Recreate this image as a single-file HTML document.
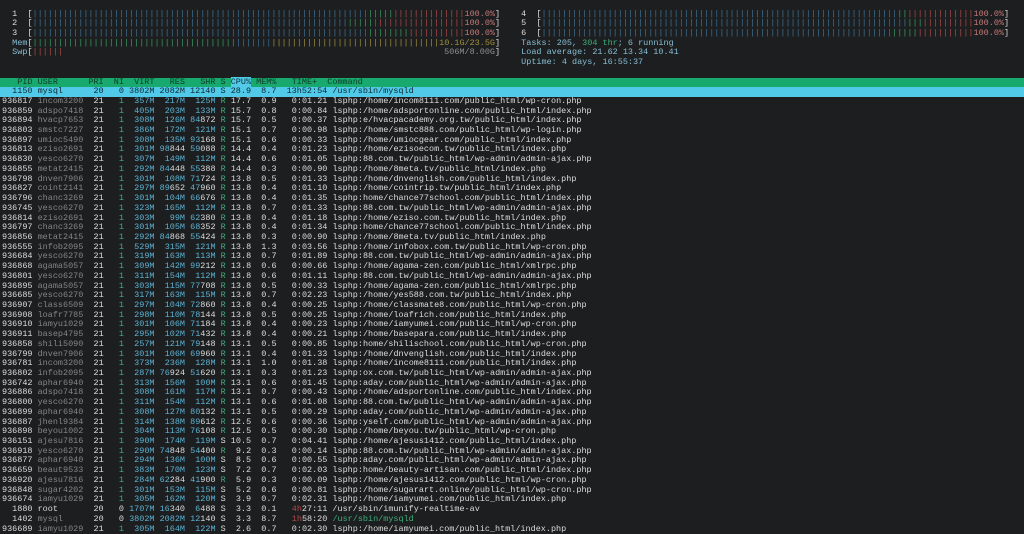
<!DOCTYPE html>
<html><head><meta charset="utf-8"><style>
html,body{margin:0;padding:0;background:#1d1e1f;width:1024px;height:529px;overflow:hidden}
.t{position:absolute;white-space:pre;font-family:"Liberation Mono",monospace;font-size:8.48px;line-height:9.72px;color:#dcdcdc}
i{font-style:normal;color:#858585}
b{font-weight:normal;color:#5bb3d5}
u{text-decoration:none;color:#3fae7a}
.r{color:#b04a4a}.bl{color:#3c7196}.gr{color:#3b9c62}.ye{color:#a08f3c}.lb{color:#86bfd6}.pc{color:#c87a7a}.gy{color:#8f8f8f}
.hd{position:absolute;left:0;width:1024px;height:9.72px}
.hd .t{left:2px;top:0}
</style></head><body>
<div class="t" style="left:2px;top:9.5px"><span>  1  [</span><span class="bl">||||||||||||||||||||||||||||||||||||||||||||||||||||||||||||||||||</span><span class="gr">|||||</span><span class="r">||||||||||||||</span><span class="pc">100.0%</span>]
  2  [<span class="bl">||||||||||||||||||||||||||||||||||||||||||||||||||||||||||||||</span><span class="gr">|||||</span><span class="r">||||||||||||||||||</span><span class="pc">100.0%</span>]
  3  [<span class="bl">||||||||||||||||||||||||||||||||||||||||||||||||||||||||||||||||||</span><span class="gr">||||||||</span><span class="r">|||||||||||</span><span class="pc">100.0%</span>]
  <span class="lb">Mem</span>[<span class="gr">||||||||||||||||||||||||||||||||||||||||</span><span class="bl">|||||||</span><span class="ye">|||||||||||||||||||||||||||||||||</span><span class="ye">10.1G/23.5G</span>]
  <span class="lb">Swp</span>[<span class="r">||||||</span>                                                                           <span class="gy">506M/8.00G</span>]</div>
<div class="t" style="left:511px;top:9.5px">  4  [<span class="bl">||||||||||||||||||||||||||||||||||||||||||||||||||||||||||||||||||||||</span><span class="gr">||</span><span class="r">|||||||||||||</span><span class="pc">100.0%</span>]
  5  [<span class="bl">||||||||||||||||||||||||||||||||||||||||||||||||||||||||||||||||||||||||</span><span class="gr">|||</span><span class="r">||||||||||</span><span class="pc">100.0%</span>]
  6  [<span class="bl">|||||||||||||||||||||||||||||||||||||||||||||||||||||||||||||||||||||</span><span class="gr">|||||</span><span class="r">|||||||||||</span><span class="pc">100.0%</span>]
  <span class="lb">Tasks: 205, </span><u>304 thr</u><span class="lb">; 6 running</span>
  <span class="lb">Load average: 21.62 13.34 10.41</span>
  <span class="lb">Uptime: 4 days, 16:55:37</span></div>
<div class="hd" style="top:77.5px;background:#17a96e"><div class="t" style="color:#0d3a26">   PID USER      PRI  NI  VIRT   RES   SHR S <span style="background:#52cbe8;color:#0d2f3a">CPU%</span> MEM%   TIME+  Command</div></div>
<div class="hd" style="top:87.2px;background:#50cae8"><div class="t" style="color:#0d2833">  1150 mysql      20   0 3802M 2082M 12140 S 28.9  8.7  13h52:54 /usr/sbin/mysqld</div></div>
<div class="t" style="left:2px;top:96.9px">936817 <i>incom3200</i>  21   <u>1</u>  <b>357M</b>  <b>217M</b>  <b>125M</b> <u>R</u> 17.7  0.9   0:01.21 lsphp:/home/incom8111.com/public_html/wp-cron.php
936859 <i>adspo7418</i>  21   <u>1</u>  <b>405M</b>  <b>203M</b>  <b>133M</b> <u>R</u> 15.7  0.8   0:00.84 lsphp:/home/adsportonline.com/public_html/index.php
936894 <i>hvacp7653</i>  21   <u>1</u>  <b>308M</b>  <b>126M</b> <b>84</b>872 <u>R</u> 15.7  0.5   0:00.37 lsphp:e/hvacpacademy.org.tw/public_html/index.php
936803 <i>smstc7227</i>  21   <u>1</u>  <b>386M</b>  <b>172M</b>  <b>121M</b> <u>R</u> 15.1  0.7   0:00.98 lsphp:/home/smstc888.com/public_html/wp-login.php
936897 <i>umioc5490</i>  21   <u>1</u>  <b>308M</b>  <b>135M</b> <b>93</b>168 <u>R</u> 15.1  0.6   0:00.33 lsphp:/home/umiocgear.com/public_html/index.php
936813 <i>eziso2691</i>  21   <u>1</u>  <b>301M</b> <b>98</b>844 <b>59</b>088 <u>R</u> 14.4  0.4   0:01.23 lsphp:/home/ezisoecom.tw/public_html/index.php
936830 <i>yesco6270</i>  21   <u>1</u>  <b>307M</b>  <b>149M</b>  <b>112M</b> <u>R</u> 14.4  0.6   0:01.05 lsphp:88.com.tw/public_html/wp-admin/admin-ajax.php
936855 <i>metat2415</i>  21   <u>1</u>  <b>292M</b> <b>84</b>448 <b>55</b>388 <u>R</u> 14.4  0.3   0:00.90 lsphp:/home/8meta.tv/public_html/index.php
936798 <i>dnven7906</i>  21   <u>1</u>  <b>301M</b>  <b>108M</b> <b>71</b>724 <u>R</u> 13.8  0.5   0:01.33 lsphp:/home/dnvenglish.com/public_html/index.php
936827 <i>coint2141</i>  21   <u>1</u>  <b>297M</b> <b>89</b>652 <b>47</b>960 <u>R</u> 13.8  0.4   0:01.10 lsphp:/home/cointrip.tw/public_html/index.php
936796 <i>chanc3269</i>  21   <u>1</u>  <b>301M</b>  <b>104M</b> <b>66</b>676 <u>R</u> 13.8  0.4   0:01.35 lsphp:home/chance77school.com/public_html/index.php
936745 <i>yesco6270</i>  21   <u>1</u>  <b>323M</b>  <b>165M</b>  <b>112M</b> <u>R</u> 13.8  0.7   0:01.33 lsphp:88.com.tw/public_html/wp-admin/admin-ajax.php
936814 <i>eziso2691</i>  21   <u>1</u>  <b>303M</b>   <b>99M</b> <b>62</b>380 <u>R</u> 13.8  0.4   0:01.18 lsphp:/home/eziso.com.tw/public_html/index.php
936797 <i>chanc3269</i>  21   <u>1</u>  <b>301M</b>  <b>105M</b> <b>68</b>352 <u>R</u> 13.8  0.4   0:01.34 lsphp:home/chance77school.com/public_html/index.php
936856 <i>metat2415</i>  21   <u>1</u>  <b>292M</b> <b>84</b>868 <b>55</b>424 <u>R</u> 13.8  0.3   0:00.90 lsphp:/home/8meta.tv/public_html/index.php
936555 <i>infob2095</i>  21   <u>1</u>  <b>529M</b>  <b>315M</b>  <b>121M</b> <u>R</u> 13.8  1.3   0:03.56 lsphp:/home/infobox.com.tw/public_html/wp-cron.php
936684 <i>yesco6270</i>  21   <u>1</u>  <b>319M</b>  <b>163M</b>  <b>113M</b> <u>R</u> 13.8  0.7   0:01.89 lsphp:88.com.tw/public_html/wp-admin/admin-ajax.php
936868 <i>agama5057</i>  21   <u>1</u>  <b>309M</b>  <b>142M</b> <b>99</b>212 <u>R</u> 13.8  0.6   0:00.66 lsphp:/home/agama-zen.com/public_html/xmlrpc.php
936801 <i>yesco6270</i>  21   <u>1</u>  <b>311M</b>  <b>154M</b>  <b>112M</b> <u>R</u> 13.8  0.6   0:01.11 lsphp:88.com.tw/public_html/wp-admin/admin-ajax.php
936895 <i>agama5057</i>  21   <u>1</u>  <b>303M</b>  <b>115M</b> <b>77</b>708 <u>R</u> 13.8  0.5   0:00.33 lsphp:/home/agama-zen.com/public_html/xmlrpc.php
936685 <i>yesco6270</i>  21   <u>1</u>  <b>317M</b>  <b>163M</b>  <b>115M</b> <u>R</u> 13.8  0.7   0:02.23 lsphp:/home/yes588.com.tw/public_html/index.php
936907 <i>class6509</i>  21   <u>1</u>  <b>297M</b>  <b>104M</b> <b>72</b>860 <u>R</u> 13.8  0.4   0:00.25 lsphp:/home/classmate8.com/public_html/wp-cron.php
936908 <i>loafr7785</i>  21   <u>1</u>  <b>298M</b>  <b>110M</b> <b>78</b>144 <u>R</u> 13.8  0.5   0:00.25 lsphp:/home/loafrich.com/public_html/index.php
936910 <i>iamyu1029</i>  21   <u>1</u>  <b>301M</b>  <b>106M</b> <b>71</b>184 <u>R</u> 13.8  0.4   0:00.23 lsphp:/home/iamyumei.com/public_html/wp-cron.php
936911 <i>basep4795</i>  21   <u>1</u>  <b>295M</b>  <b>102M</b> <b>71</b>432 <u>R</u> 13.8  0.4   0:00.21 lsphp:/home/basepara.com/public_html/index.php
936858 <i>shili5090</i>  21   <u>1</u>  <b>257M</b>  <b>121M</b> <b>79</b>148 <u>R</u> 13.1  0.5   0:00.85 lsphp:home/shilischool.com/public_html/wp-cron.php
936799 <i>dnven7906</i>  21   <u>1</u>  <b>301M</b>  <b>106M</b> <b>69</b>960 <u>R</u> 13.1  0.4   0:01.33 lsphp:/home/dnvenglish.com/public_html/index.php
936781 <i>incom3200</i>  21   <u>1</u>  <b>373M</b>  <b>236M</b>  <b>128M</b> <u>R</u> 13.1  1.0   0:01.38 lsphp:/home/income8111.com/public_html/index.php
936802 <i>infob2095</i>  21   <u>1</u>  <b>287M</b> <b>76</b>924 <b>51</b>620 <u>R</u> 13.1  0.3   0:01.23 lsphp:ox.com.tw/public_html/wp-admin/admin-ajax.php
936742 <i>aphar6940</i>  21   <u>1</u>  <b>313M</b>  <b>156M</b>  <b>100M</b> <u>R</u> 13.1  0.6   0:01.45 lsphp:aday.com/public_html/wp-admin/admin-ajax.php
936886 <i>adspo7418</i>  21   <u>1</u>  <b>308M</b>  <b>161M</b>  <b>117M</b> <u>R</u> 13.1  0.7   0:00.43 lsphp:/home/adsportonline.com/public_html/index.php
936800 <i>yesco6270</i>  21   <u>1</u>  <b>311M</b>  <b>154M</b>  <b>112M</b> <u>R</u> 13.1  0.6   0:01.08 lsphp:88.com.tw/public_html/wp-admin/admin-ajax.php
936899 <i>aphar6940</i>  21   <u>1</u>  <b>308M</b>  <b>127M</b> <b>80</b>132 <u>R</u> 13.1  0.5   0:00.29 lsphp:aday.com/public_html/wp-admin/admin-ajax.php
936887 <i>jhenl9384</i>  21   <u>1</u>  <b>314M</b>  <b>138M</b> <b>89</b>612 <u>R</u> 12.5  0.6   0:00.36 lsphp:yself.com/public_html/wp-admin/admin-ajax.php
936898 <i>beyou1002</i>  21   <u>1</u>  <b>304M</b>  <b>113M</b> <b>76</b>108 <u>R</u> 12.5  0.5   0:00.30 lsphp:/home/beyou.tw/public_html/wp-cron.php
936151 <i>ajesu7816</i>  21   <u>1</u>  <b>390M</b>  <b>174M</b>  <b>119M</b> S 10.5  0.7   0:04.41 lsphp:/home/ajesus1412.com/public_html/index.php
936918 <i>yesco6270</i>  21   <u>1</u>  <b>290M</b> <b>74</b>848 <b>54</b>400 <u>R</u>  9.2  0.3   0:00.14 lsphp:88.com.tw/public_html/wp-admin/admin-ajax.php
936877 <i>aphar6940</i>  21   <u>1</u>  <b>294M</b>  <b>136M</b>  <b>100M</b> S  8.5  0.6   0:00.55 lsphp:aday.com/public_html/wp-admin/admin-ajax.php
936659 <i>beaut9533</i>  21   <u>1</u>  <b>383M</b>  <b>170M</b>  <b>123M</b> S  7.2  0.7   0:02.03 lsphp:home/beauty-artisan.com/public_html/index.php
936920 <i>ajesu7816</i>  21   <u>1</u>  <b>284M</b> <b>62</b>284 <b>41</b>900 <u>R</u>  5.9  0.3   0:00.09 lsphp:/home/ajesus1412.com/public_html/wp-cron.php
936848 <i>sugar4202</i>  21   <u>1</u>  <b>301M</b>  <b>153M</b>  <b>115M</b> S  5.2  0.6   0:00.81 lsphp:/home/sugarart.online/public_html/wp-cron.php
936674 <i>iamyu1029</i>  21   <u>1</u>  <b>305M</b>  <b>162M</b>  <b>120M</b> S  3.9  0.7   0:02.31 lsphp:/home/iamyumei.com/public_html/index.php
  1880 root       20   0 <b>1707M</b> <b>16</b>340  <b>6</b>488 S  3.3  0.1   <span class="r">4h</span>27:11 /usr/sbin/imunify-realtime-av
  1402 <i>mysql</i>      20   0 <b>3802M</b> <b>2082M</b> <b>12</b>140 S  3.3  8.7   <span class="r">1h</span>58:20 <u>/usr/sbin/mysqld</u>
936689 <i>iamyu1029</i>  21   <u>1</u>  <b>305M</b>  <b>164M</b>  <b>122M</b> S  2.6  0.7   0:02.30 lsphp:/home/iamyumei.com/public_html/index.php</div>
</body></html>
